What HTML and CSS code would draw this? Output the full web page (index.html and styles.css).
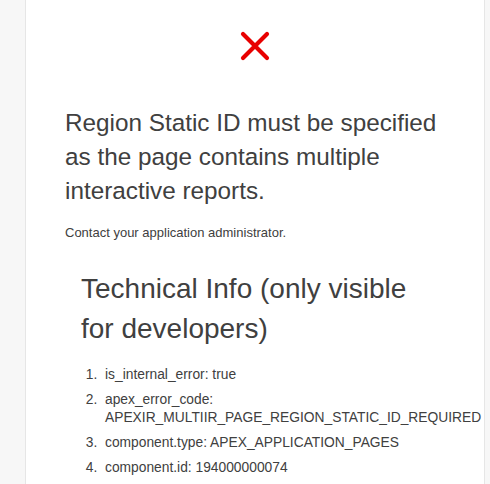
FILE: index.html
```html
<!DOCTYPE html>
<html>
<head>
<meta charset="utf-8">
<link rel="stylesheet" href="styles.css">
</head>
<body>
<div class="card">
  <div class="icon">
    <svg width="30" height="30" viewBox="0 0 30 30"><path d="M3 3 L27 27 M27 3 L3 27" stroke="#e80000" stroke-width="4.2" stroke-linecap="round" fill="none"/></svg>
  </div>
  <div class="content">
    <h1 class="msg">Region Static ID must be specified as the page contains multiple interactive reports.</h1>
    <p class="contact">Contact your application administrator.</p>
    <div class="tech">
      <h2 class="tech-title">Technical Info (only visible for developers)</h2>
      <ol class="tech-list">
        <li>is_internal_error: true</li>
        <li>apex_error_code: APEXIR_MULTIIR_PAGE_REGION_STATIC_ID_REQUIRED</li>
        <li>component.type: APEX_APPLICATION_PAGES</li>
        <li>component.id: 194000000074</li>
        <li>component.name: Tables and Trails</li>
      </ol>
    </div>
  </div>
</div>
</body>
</html>
```
FILE: styles.css
```css
html, body {
  margin: 0;
  padding: 0;
  background: #f7f7f7;
  font-family: "Liberation Sans", Arial, sans-serif;
  color: #404040;
  overflow: hidden;
  height: 484px;
}
.card {
  margin-left: 25px;
  width: 458px;
  min-height: 484px;
  background: #fff;
  border-left: 1px solid #e6e6e6;
  border-right: 1px solid #e6e6e6;
}
.icon {
  display: flex;
  justify-content: center;
  padding-top: 31px;
}
.icon svg { display: block; }
.content {
  padding: 0 0 0 39px;
}
.msg {
  margin: 45px 0 0;
  width: 380px;
  font-size: 24.3px;
  font-weight: normal;
  line-height: 34px;
}
.contact {
  margin: 16px 0 0;
  font-size: 13px;
  line-height: 18px;
}
.tech {
  padding-left: 16px;
  width: 350px;
}
.tech-title {
  margin: 27px 0 0;
  font-size: 28px;
  font-weight: normal;
  line-height: 40px;
}
.tech-list {
  margin: 17px 0 0;
  padding-left: 24px;
  font-size: 13.8px;
  line-height: 18px;
}
.tech-list li {
  margin-bottom: 7px;
}
.tech-list li::marker {
  content: counter(list-item) ".  ";
}
```
